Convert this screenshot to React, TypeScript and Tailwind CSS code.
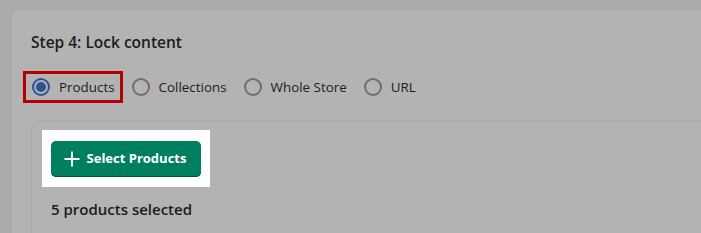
const options = ["Products", "Collections", "Whole Store", "URL"];

function Radio({ checked }: { checked?: boolean }) {
  return (
    <span
      className={
        "flex h-[18px] w-[18px] shrink-0 items-center justify-center rounded-full border-2 " +
        (checked ? "border-[#2a5595]" : "border-[#6e6e6e]")
      }
    >
      {checked && <span className="h-[10px] w-[10px] rounded-full bg-[#2a5595]" />}
    </span>
  );
}

function PlusIcon() {
  return (
    <svg width="16" height="16" viewBox="0 0 16 16" fill="none" stroke="currentColor" strokeWidth="2" className="shrink-0">
      <path d="M8 0.5v15M0.5 8h15" />
    </svg>
  );
}

export default function App() {
  return (
    <div
      className="h-[233px] w-[701px] overflow-hidden bg-[#ababab] pl-[11px] pt-[9px] text-[#1c1c1c]"
      style={{ fontFamily: '"Open Sans", "Noto Sans", sans-serif' }}
    >
      <div className="w-[740px] rounded-tl-[9px] border border-[#a8a8a8] bg-[#b3b3b3] pl-[19px] pt-[22px] pb-10">
        <h2 className="text-[15.5px] font-semibold leading-5">Step 4: Lock content</h2>

        <div className="mt-[19px] flex items-center">
          <div className="-ml-[8px] flex h-8 items-center gap-[9px] border-[3px] border-[#b30000] pl-[6px] pr-[5px]">
            <Radio checked />
            <span className="text-[13.4px]">Products</span>
          </div>
          {options.slice(1).map((o) => (
            <div key={o} className="ml-[9px] flex items-center gap-[9px] pr-[8px]">
              <Radio />
              <span className="text-[13.4px]">{o}</span>
            </div>
          ))}
        </div>

        <div className="mt-[18px] rounded-tl-[9px] border border-[#a9a9a9] bg-[#b3b3b3] pl-[10px] pt-[8px] pb-10">
          <div className="inline-flex bg-white px-[9px] pt-[11px] pb-[10px]">
            <button className="flex h-9 w-[150px] items-center justify-center gap-[7px] rounded-[5px] bg-[#007f5f] pr-[2px] text-[13px] font-bold text-white shadow-[inset_0_-1px_0_#00553f]">
              <PlusIcon />
              Select Products
            </button>
          </div>
          <div className="mt-[11px] pl-[9px] text-[15px] font-semibold">5 products selected</div>
        </div>
      </div>
    </div>
  );
}
